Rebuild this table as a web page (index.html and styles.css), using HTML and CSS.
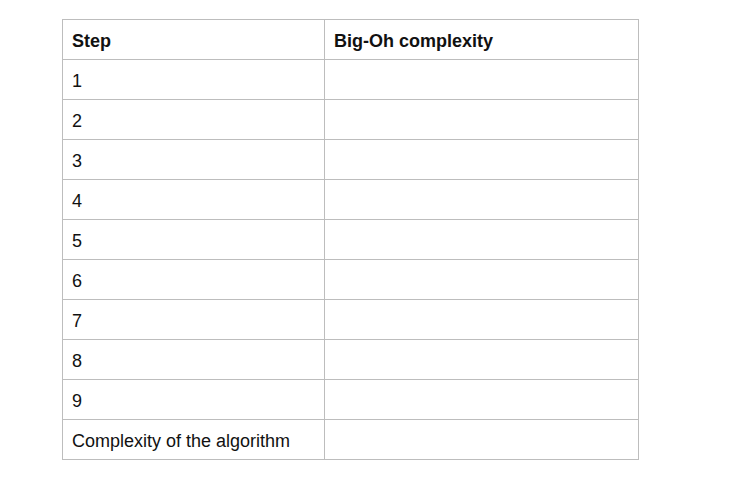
FILE: index.html
```html
<!DOCTYPE html>
<html>
<head>
<meta charset="utf-8">
<link rel="stylesheet" href="styles.css">
</head>
<body>
<div class="page">
<table class="grid">
<colgroup><col class="c1"><col class="c2"></colgroup>
<tr class="head"><td>Step</td><td>Big-Oh complexity</td></tr>
<tr><td>1</td><td></td></tr>
<tr><td>2</td><td></td></tr>
<tr><td>3</td><td></td></tr>
<tr><td>4</td><td></td></tr>
<tr><td>5</td><td></td></tr>
<tr><td>6</td><td></td></tr>
<tr><td>7</td><td></td></tr>
<tr><td>8</td><td></td></tr>
<tr><td>9</td><td></td></tr>
<tr><td>Complexity of the algorithm</td><td></td></tr>
</table>
</div>
</body>
</html>
```
FILE: styles.css
```css
html, body {
  margin: 0;
  padding: 0;
  background: #ffffff;
}
.page {
  padding: 19px 0 0 62px;
  font-family: "Liberation Sans", Arial, sans-serif;
  color: #111;
}
.grid {
  border-collapse: collapse;
  width: 576px;
  table-layout: fixed;
}
.c1 { width: 262px; }
.c2 { width: 314px; }
.grid td {
  border: 1px solid #bdbdbd;
  height: 40px;
  padding: 3px 9px 0 9px;
  font-size: 18px;
  line-height: 20px;
  vertical-align: middle;
  box-sizing: border-box;
}
.head td {
  font-weight: bold;
}
```
